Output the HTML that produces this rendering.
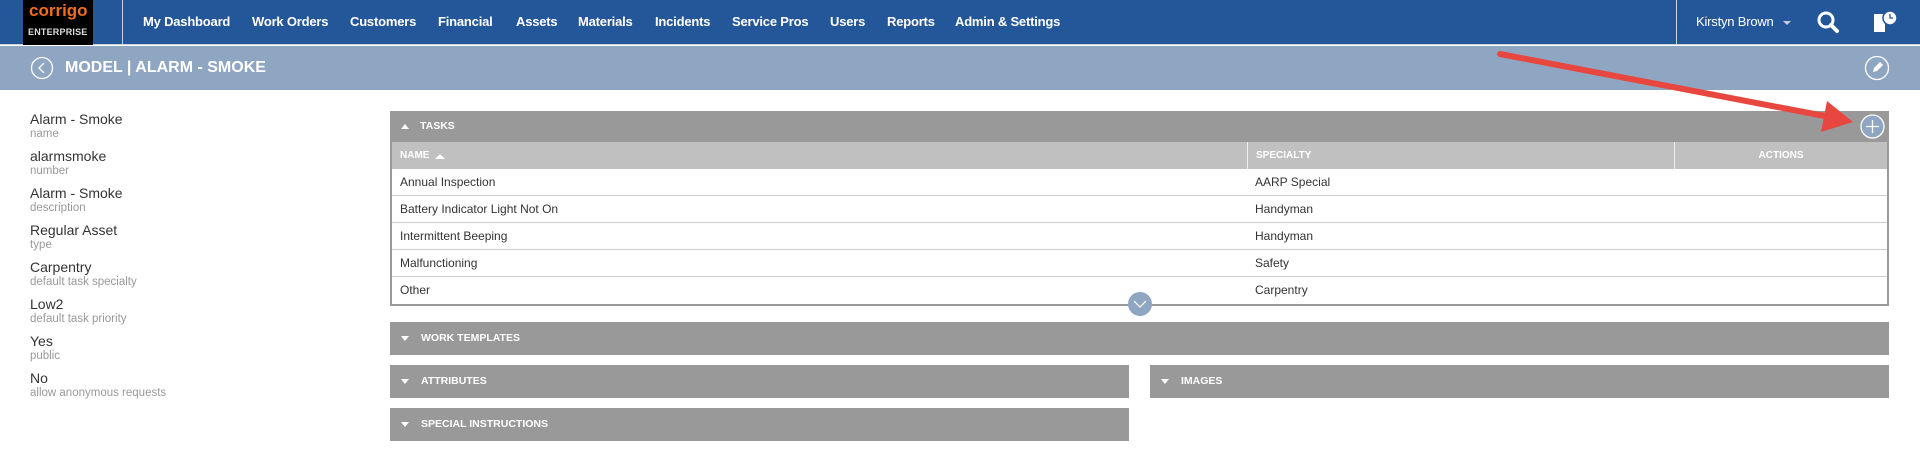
<!DOCTYPE html>
<html><head><meta charset="utf-8"><style>
*{margin:0;padding:0;box-sizing:border-box}
body{width:1920px;height:450px;overflow:hidden;background:#fff;font-family:"Liberation Sans",Arial,sans-serif;position:relative}
.abs{position:absolute}
#nav{left:0;top:0;width:1920px;height:45px;background:#24569a;border-bottom:1px solid #c9d3e2}
.ni{position:absolute;top:14px;color:#fff;font-weight:bold;font-size:13px;letter-spacing:-0.2px}
#sub{left:0;top:46px;width:1920px;height:44px;background:#8fa6c3}
.fv{position:absolute;left:30px;font-size:14px;color:#333}
.fl{position:absolute;left:30px;font-size:11.5px;color:#999}
.ph{position:absolute;background:#999;color:#fff;font-weight:bold;font-size:10.5px;height:33px;line-height:33px;padding-left:31px}
.ph:before{content:"";position:absolute;left:11px;top:14px;border-left:4px solid transparent;border-right:4px solid transparent;border-top:5px solid #fff}
.row{position:absolute;left:0;width:1495px;height:27px;border-bottom:1px solid #ccc;font-size:12px;color:#333;line-height:26px}
.row span{position:absolute}
</style></head><body>
<div id="nav" class="abs">
 <div class="abs" style="left:23px;top:0;width:70px;height:45px;background:#000">
  <div class="abs" style="left:6px;top:1px;color:#f26c1e;font-size:17px;font-weight:bold">corrigo</div>
  <div class="abs" style="left:5px;top:27px;color:#ddd;font-size:9px;font-weight:bold;letter-spacing:0.2px">ENTERPRISE</div>
 </div>
 <div class="abs" style="left:122px;top:0;width:1px;height:45px;background:#c9d3e2"></div>
 <div class="ni" style="left:143px">My Dashboard</div>
 <div class="ni" style="left:252px">Work Orders</div>
 <div class="ni" style="left:350px">Customers</div>
 <div class="ni" style="left:438px">Financial</div>
 <div class="ni" style="left:516px">Assets</div>
 <div class="ni" style="left:578px">Materials</div>
 <div class="ni" style="left:655px">Incidents</div>
 <div class="ni" style="left:732px">Service Pros</div>
 <div class="ni" style="left:830px">Users</div>
 <div class="ni" style="left:887px">Reports</div>
 <div class="ni" style="left:955px">Admin &amp; Settings</div>
 <div class="abs" style="left:1676px;top:0;width:1px;height:45px;background:#c9d3e2"></div>
 <div class="ni" style="left:1696px;font-weight:normal;font-size:13px">Kirstyn Brown</div>
 <div class="abs" style="left:1783px;top:21px;border-left:4px solid transparent;border-right:4px solid transparent;border-top:4px solid #ccd"></div>
 <svg class="abs" style="left:1816px;top:10px" width="26" height="26"><circle cx="10" cy="10" r="7" stroke="#fff" stroke-width="3" fill="none"/><line x1="15" y1="15" x2="21" y2="21" stroke="#fff" stroke-width="4" stroke-linecap="round"/></svg>
 <svg class="abs" style="left:1872px;top:10px" width="26" height="26"><path d="M2 4h11v18h-11z" fill="#fff"/><circle cx="18" cy="8" r="7" fill="#fff" stroke="#24569a" stroke-width="1.5"/><path d="M18 4v4h3" stroke="#24569a" stroke-width="1.3" fill="none"/></svg>
</div>
<div id="sub" class="abs">
 <svg class="abs" style="left:30px;top:10px" width="24" height="24"><circle cx="12" cy="12" r="10.5" stroke="#fff" stroke-width="1.3" fill="none"/><path d="M14 7l-5 5 5 5" stroke="#fff" stroke-width="1.3" fill="none"/></svg>
 <div class="abs" style="left:65px;top:13px;color:#fff;font-weight:bold;font-size:16px">MODEL | ALARM - SMOKE</div>
 <svg class="abs" style="left:1864px;top:9px" width="26" height="26"><circle cx="13" cy="13" r="11.5" stroke="#fff" stroke-width="1.3" fill="none"/><path d="M9 17l1-4 6-6 3 3-6 6z" fill="#fff"/></svg>
</div>

<div class="fv" style="top:111px">Alarm - Smoke</div><div class="fl" style="top:128px">name</div>
<div class="fv" style="top:148px">alarmsmoke</div><div class="fl" style="top:165px">number</div>
<div class="fv" style="top:185px">Alarm - Smoke</div><div class="fl" style="top:202px">description</div>
<div class="fv" style="top:222px">Regular Asset</div><div class="fl" style="top:239px">type</div>
<div class="fv" style="top:259px">Carpentry</div><div class="fl" style="top:276px">default task specialty</div>
<div class="fv" style="top:296px">Low2</div><div class="fl" style="top:313px">default task priority</div>
<div class="fv" style="top:333px">Yes</div><div class="fl" style="top:350px">public</div>
<div class="fv" style="top:370px">No</div><div class="fl" style="top:387px">allow anonymous requests</div>

<div class="abs" style="left:390px;top:111px;width:1499px;height:195px;border:2px solid #999;border-top:0;background:#fff">
 <div class="abs" style="left:-2px;top:0;width:1499px;height:31px;background:#999;color:#fff;font-weight:bold;font-size:10.5px;line-height:31px;padding-left:30px">TASKS</div>
 <div class="abs" style="left:9px;top:13px;border-left:4px solid transparent;border-right:4px solid transparent;border-bottom:5px solid #fff"></div>
 <div class="abs" style="left:0;top:31px;width:1495px;height:27px;background:#c0c0c0;color:#fff;font-weight:bold;font-size:10px;line-height:27px">
  <span class="abs" style="left:8px">NAME</span>
  <span class="abs" style="left:43px;top:12px;border-left:5px solid transparent;border-right:5px solid transparent;border-bottom:5px solid #fff"></span>
  <span class="abs" style="left:855px;top:0;width:1px;height:27px;background:#eee"></span>
  <span class="abs" style="left:864px">SPECIALTY</span>
  <span class="abs" style="left:1282px;top:0;width:1px;height:27px;background:#eee"></span>
  <span class="abs" style="left:1283px;width:212px;text-align:center">ACTIONS</span>
 </div>
 <div class="row" style="top:58px"><span style="left:8px">Annual Inspection</span><span style="left:863px">AARP Special</span></div>
 <div class="row" style="top:85px"><span style="left:8px">Battery Indicator Light Not On</span><span style="left:863px">Handyman</span></div>
 <div class="row" style="top:112px"><span style="left:8px">Intermittent Beeping</span><span style="left:863px">Handyman</span></div>
 <div class="row" style="top:139px"><span style="left:8px">Malfunctioning</span><span style="left:863px">Safety</span></div>
 <div class="row" style="top:166px;border-bottom:0"><span style="left:8px">Other</span><span style="left:863px">Carpentry</span></div>
</div>
<svg class="abs" style="left:1128px;top:292px" width="24" height="24"><circle cx="12" cy="12" r="12" fill="#8fa6c3"/><path d="M6 9l6 6 6-6" stroke="#fff" stroke-width="1.2" fill="none"/></svg>
<svg class="abs" style="left:1860px;top:114px" width="25" height="25"><circle cx="12.5" cy="12.5" r="11.5" fill="#8fa6c3" stroke="#fff" stroke-width="1.3"/><path d="M12.5 6v13M6 12.5h13" stroke="#fff" stroke-width="1.3"/></svg>

<div class="ph" style="left:390px;top:322px;width:1499px">WORK TEMPLATES</div>
<div class="ph" style="left:390px;top:365px;width:739px">ATTRIBUTES</div>
<div class="ph" style="left:1150px;top:365px;width:739px">IMAGES</div>
<div class="ph" style="left:390px;top:408px;width:739px">SPECIAL INSTRUCTIONS</div>

<svg class="abs" style="left:0;top:0;pointer-events:none" width="1920" height="450">
 <line x1="1500" y1="54" x2="1830" y2="117" stroke="#e8473f" stroke-width="6" stroke-linecap="round"/>
 <path d="M1853 122 L1827 101 L1821 132 Z" fill="#e8473f"/>
</svg>
</body></html>
